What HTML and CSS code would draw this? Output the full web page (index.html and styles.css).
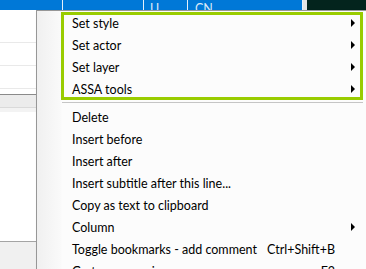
FILE: index.html
```html
<!DOCTYPE html>
<html>
	<head>
		<meta charset="utf-8" />
		<title>Subtitle grid menu</title>
		<link rel="stylesheet" href="styles.css">
	</head>
	<body>
		<div id="app">
			<div class="header">
				<div class="col c1"></div>
				<div class="col c2"></div>
				<div class="col c3">U</div>
				<div class="col c4">CN</div>
				<div class="gap"></div>
				<div class="dark"></div>
			</div>
			<div class="grid">
				<div class="row first"></div>
				<div class="row"></div>
				<div class="row"></div>
				<div class="row last"></div>
			</div>
			<div class="panel"></div>
			<div class="blank"></div>
			<div class="footer"></div>

			<div id="contextMenu">
				<ul class="items">
					<li class="group">
						<ul>
							<li class="item"><span class="label">Set style</span><span class="arrow"></span></li>
							<li class="item"><span class="label">Set actor</span><span class="arrow"></span></li>
							<li class="item"><span class="label">Set layer</span><span class="arrow"></span></li>
							<li class="item"><span class="label">ASSA tools</span><span class="arrow"></span></li>
						</ul>
					</li>
					<li class="separator"></li>
					<li class="item"><span class="label">Delete</span><span class="slot"></span></li>
					<li class="item"><span class="label">Insert before</span><span class="slot"></span></li>
					<li class="item"><span class="label">Insert after</span><span class="slot"></span></li>
					<li class="item"><span class="label">Insert subtitle after this line...</span><span class="slot"></span></li>
					<li class="item"><span class="label">Copy as text to clipboard</span><span class="slot"></span></li>
					<li class="item"><span class="label">Column</span><span class="arrow"></span></li>
					<li class="item"><span class="label">Toggle bookmarks - add comment</span><span class="shortcut">Ctrl+Shift+B</span><span class="slot"></span></li>
					<li class="item"><span class="label">Go to source view</span><span class="shortcut">F2</span><span class="slot"></span></li>
				</ul>
			</div>
		</div>
	</body>
</html>
```

FILE: styles.css
```css
body, html {
	width: 100%;
	height: 100%;
	padding: 0;
	margin: 0;
	overflow: hidden;
}
#app {
	position: relative;
	width: 366px;
	height: 269px;
	overflow: hidden;
	background-color: #fff;
	font-family: "Segoe UI", Lato, "Noto Sans", sans-serif;
	font-size: 12.5px;
	color: #000;
}

.header {
	display: flex;
	height: 10px;
	overflow: hidden;
	background-color: #0078d7;
}
.header .col {
	box-sizing: border-box;
	border-right: 1px solid #e6f0fa;
	color: #dbe9f8;
	line-height: 12px;
	padding: 3px 0 0 6px;
}
.header .c1 { width: 63px; }
.header .c2 { width: 81px; }
.header .c3 { width: 44px; }
.header .c4 { width: 115px; padding-left: 7px; }
.header .gap {
	width: 4px;
	background-color: #e4e4e4;
}
.header .dark {
	flex: 1;
	background-color: #03241d;
}

.grid .row {
	height: 22px;
	border-bottom: 1px solid #e9e9e9;
}
.grid .row.first {
	height: 32px;
}
.grid .row.last {
	height: 5px;
	border-bottom: 1px solid #8a8a8a;
}
.panel {
	height: 12px;
	background-color: #ececec;
	border-bottom: 1px solid #dadada;
}
.blank {
	height: 129px;
	border-top: 4px solid #f3f3f3;
	border-bottom: 1px solid #a4a4a4;
}
.footer {
	height: 40px;
	background-color: #f0f0f0;
}

#contextMenu {
	position: absolute;
	left: 36px;
	top: 10px;
	padding: 1px 20px 4px 0;
	border: 1px solid #979797;
	background: linear-gradient(to right, #f0f0f0 0, #fafafa 24px, #fcfcfc 25px, #fcfcfc 100%);
	box-shadow: 2px 2px 3px rgba(0, 0, 0, 0.2);
}
#contextMenu ul {
	list-style: none;
	margin: 0;
	padding: 0;
}
#contextMenu .items {
	width: 302px;
	margin-left: 24px;
}
#contextMenu .group {
	position: relative;
}
#contextMenu .group::after {
	content: "";
	position: absolute;
	left: 0;
	top: 0;
	right: 0;
	bottom: 0;
	border: 3px solid #99cc00;
}
#contextMenu .item {
	display: flex;
	align-items: center;
	height: 22px;
	padding: 0 8px 0 11px;
	white-space: nowrap;
}
#contextMenu .label {
	flex: 1;
}
#contextMenu .shortcut {
	margin-right: 16px;
}
#contextMenu .slot {
	width: 4px;
}
#contextMenu .arrow {
	width: 0;
	height: 0;
	border-top: 4px solid transparent;
	border-bottom: 4px solid transparent;
	border-left: 4px solid #000;
}
#contextMenu .separator {
	height: 1px;
	margin: 2px 0 3px 1px;
	background-color: #c5c5c5;
}
```
